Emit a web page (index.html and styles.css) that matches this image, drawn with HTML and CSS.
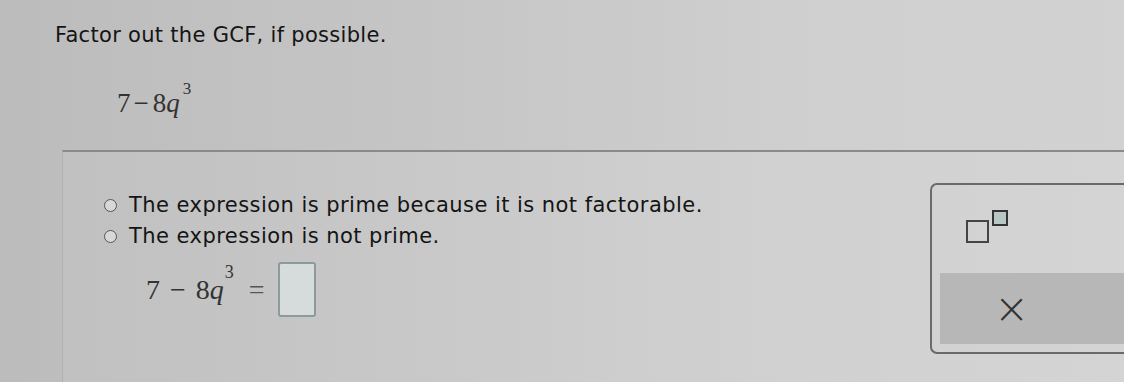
FILE: index.html
```html
<!DOCTYPE html>
<html>
<head>
<meta charset="utf-8">
<link rel="stylesheet" href="styles.css">
</head>
<body>
<div class="page">
  <div class="prompt">Factor out the GCF, if possible.</div>
  <div class="expr"><span class="n">7</span><span class="op">−</span><span class="n">8</span><i class="v">q</i><sup class="ex">3</sup></div>
  <div class="panel">
    <div class="content">
      <div class="choices">
        <label class="choice"><span class="radio"></span>The expression is prime because it is not factorable.</label>
        <label class="choice"><span class="radio"></span>The expression is not prime.</label>
      </div>
      <div class="eq"><span class="n">7</span><span class="op2">−</span><span class="n">8</span><i class="v">q</i><sup class="ex2">3</sup><span class="eqs">=</span><span class="box"></span></div>
    </div>
    <div class="tools">
      <div class="tool-top">
        <span class="ico"><span class="base"></span><span class="sup"></span></span>
      </div>
      <div class="tool-bar"><span class="x">×</span></div>
    </div>
  </div>
</div>
</body>
</html>
```
FILE: styles.css
```css
html, body { margin: 0; padding: 0; }
body {
  width: 1124px; height: 382px; overflow: hidden;
  background: linear-gradient(90deg, #bcbcbc 0%, #c6c6c6 40%, #cfcfcf 70%, #d2d2d2 100%);
  font-family: "DejaVu Sans", sans-serif;
  color: #141414;
}
.page { padding: 23px 0 0 55px; }
.prompt { font-size: 21px; line-height: 24px; letter-spacing: 0.3px; }
.expr {
  font-family: "Liberation Serif", serif; font-size: 27px; color: #333;
  margin: 40px 0 0 62px; height: 43px;
}
.expr .op { margin: 0 4px 0 3px; }
.v { font-style: italic; }
.ex { font-size: 17px; position: relative; top: -8px; margin-left: 3px; }
.panel {
  margin: 20px 0 0 7px;
  border-top: 2px solid #8a8a8a;
  border-left: 1px solid #b0b0b0;
  height: 240px;
  display: flex;
  background: rgba(255,255,255,0.06);
}
.content { flex: 1; padding: 41px 0 0 41px; }
.choices { display: flex; flex-direction: column; gap: 7px; }
.choice { display: flex; align-items: center; font-size: 21px; line-height: 24px; letter-spacing: 0.45px; }
.radio {
  width: 11px; height: 11px; border: 1.5px solid #555; border-radius: 50%;
  margin-right: 12px; background: #d8d8d8;
}
.eq {
  font-family: "Liberation Serif", serif; font-size: 28px; color: #333;
  margin: 14px 0 0 42px; display: flex; align-items: center;
}
.op2 { margin: 0 10px; }
.ex2 { font-size: 18px; position: relative; top: 0px; margin-left: 1px; align-self: flex-start; }
.eqs { margin: 0 13px 0 15px; color: #555; }
.box {
  width: 34px; height: 51px; border: 2px solid #8e9a9a; border-radius: 3px;
  background: #d6dcdc;
}
.tools {
  width: 192px; margin-top: 31px; height: 167px;
  border: 2px solid #6a6a6a; border-right: none; border-radius: 7px 0 0 7px;
  display: flex; flex-direction: column;
}
.tool-top { height: 88px; position: relative; }
.ico { position: absolute; left: 34px; top: 23px; }
.base { position: absolute; left: 0; top: 12px; width: 19px; height: 19px; border: 2px solid #444; }
.sup { position: absolute; left: 26px; top: 2px; width: 12px; height: 12px; border: 2px solid #333; background: #b9c6c6; }
.tool-bar {
  margin: 0 0 8px 8px; flex: 1; background: #b7b7b7;
  display: flex; align-items: center; padding-left: 54px;
}
.x { font-size: 42px; color: #333; font-weight: 300; line-height: 1; }
```
